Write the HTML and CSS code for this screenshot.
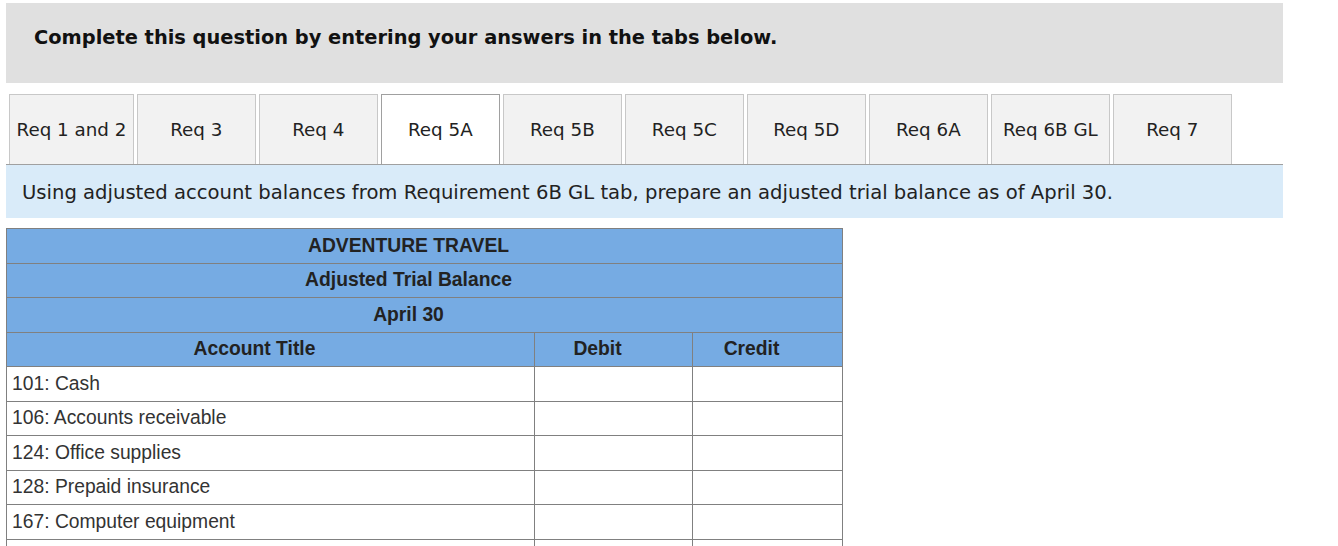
FILE: index.html
```html
<!DOCTYPE html>
<html lang="en">
<head>
    <meta charset="UTF-8">
    <title>Adjusted Trial Balance</title>
    <link rel="stylesheet" href="styles.css">
</head>
<body>
    <div class="page">
        <div class="prompt">Complete this question by entering your answers in the tabs below.</div>

        <div class="tabs">
            <div class="tab">Req 1 and 2</div>
            <div class="tab">Req 3</div>
            <div class="tab">Req 4</div>
            <div class="tab active">Req 5A</div>
            <div class="tab">Req 5B</div>
            <div class="tab">Req 5C</div>
            <div class="tab">Req 5D</div>
            <div class="tab">Req 6A</div>
            <div class="tab">Req 6B GL</div>
            <div class="tab">Req 7</div>
        </div>

        <div class="instructions">Using adjusted account balances from Requirement 6B GL tab, prepare an adjusted trial balance as of April 30.</div>

        <table class="trial">
            <thead>
                <tr><th colspan="3">ADVENTURE TRAVEL</th></tr>
                <tr><th colspan="3">Adjusted Trial Balance</th></tr>
                <tr><th colspan="3">April 30</th></tr>
                <tr>
                    <th class="col-title">Account Title</th>
                    <th class="col-debit">Debit</th>
                    <th class="col-credit">Credit</th>
                </tr>
            </thead>
            <tbody>
                <tr><td>101: Cash</td><td></td><td></td></tr>
                <tr><td>106: Accounts receivable</td><td></td><td></td></tr>
                <tr><td>124: Office supplies</td><td></td><td></td></tr>
                <tr><td>128: Prepaid insurance</td><td></td><td></td></tr>
                <tr><td>167: Computer equipment</td><td></td><td></td></tr>
                <tr><td></td><td></td><td></td></tr>
            </tbody>
        </table>
    </div>
</body>
</html>
```

FILE: styles.css
```css
html, body {
    margin: 0;
    padding: 0;
    background: #fff;
}

.page {
    padding: 3px 6px;
    width: 1277px;
    font-family: "DejaVu Sans", Verdana, sans-serif;
    color: #111;
}

.prompt {
    background-color: #e0e0e0;
    height: 80px;
    box-sizing: border-box;
    padding: 23px 28px 0;
    font-size: 19.4px;
    font-weight: bold;
}

.tabs {
    display: flex;
    gap: 3px;
    margin-top: 11px;
    padding-left: 3px;
    border-bottom: 1px solid #a0a0a0;
}
.tab {
    min-width: 104px;
    height: 69px;
    padding: 0 6.5px;
    display: flex;
    align-items: center;
    justify-content: center;
    background-color: #f2f2f2;
    border: 1px solid #c8c8c8;
    border-bottom: none;
    font-size: 18.3px;
    color: #222;
}
.tab.active {
    background-color: #fff;
    border-color: #a0a0a0;
    margin-bottom: -1px;
    height: 70px;
    padding-bottom: 1px;
    box-sizing: border-box;
    min-width: 119px;
}

.instructions {
    background-color: #d9ebf9;
    height: 53px;
    box-sizing: border-box;
    padding: 16px 16px 0;
    font-size: 19.6px;
    color: #222;
}

.trial {
    margin-top: 10px;
    border-collapse: collapse;
    width: 837px;
    font-family: "Liberation Sans", Arial, sans-serif;
    font-size: 19.3px;
    color: #333;
}
.trial th, .trial td {
    border: 1px solid #808080;
    height: 34.5px;
    padding: 0 5px;
    box-sizing: border-box;
}
.trial th {
    background-color: #76abe3;
    color: #222;
    text-align: center;
    padding-right: 37px;
}
.col-title { width: 528px; }
.col-debit { width: 158px; }
.col-credit { width: 150px; }
```
